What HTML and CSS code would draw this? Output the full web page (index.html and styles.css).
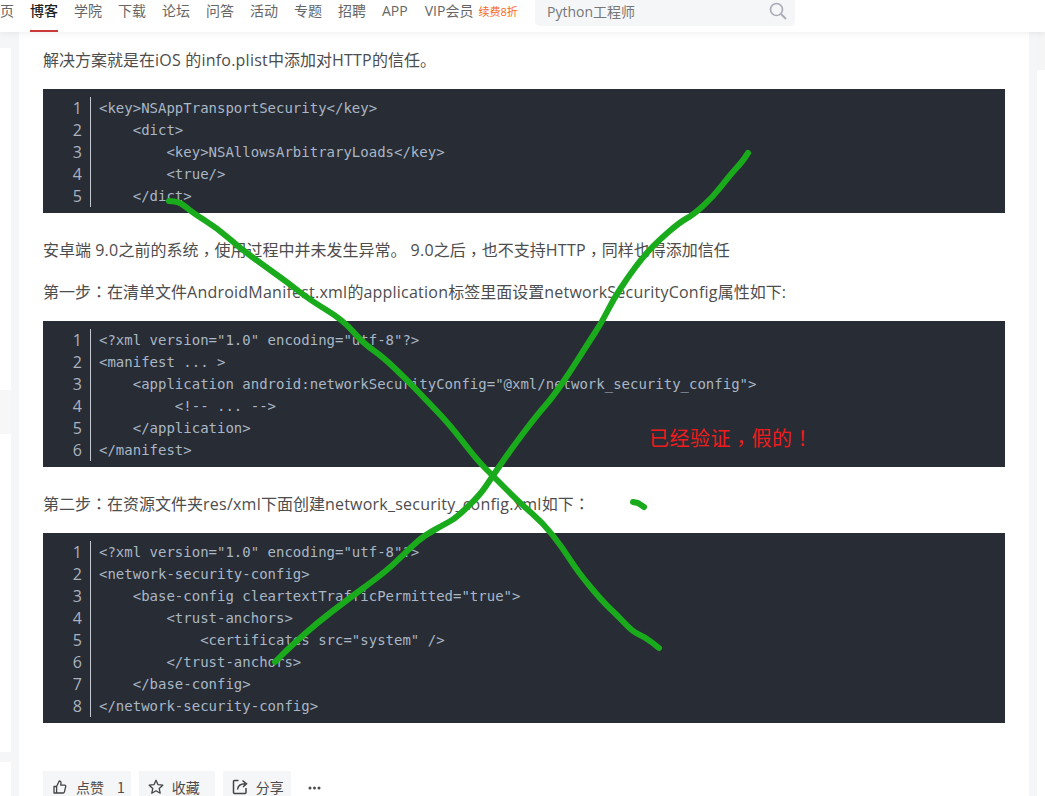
FILE: index.html
```html
<!DOCTYPE html>
<html lang="zh-CN">
<head>
<meta charset="utf-8">
<title>博客</title>
<link rel="stylesheet" href="styles.css">
</head>
<body>
<header class="topbar">
  <nav class="nav">
    <a class="nav-item">首页</a>
    <a class="nav-item active">博客</a>
    <a class="nav-item">学院</a>
    <a class="nav-item">下载</a>
    <a class="nav-item">论坛</a>
    <a class="nav-item">问答</a>
    <a class="nav-item">活动</a>
    <a class="nav-item">专题</a>
    <a class="nav-item">招聘</a>
    <a class="nav-item">APP</a>
    <a class="nav-item vip">VIP会员<span class="vip-tag">续费8折</span></a>
  </nav>
  <div class="search">
    <span class="search-text">Python工程师</span>
    <svg class="search-icon" viewBox="0 0 18 18" width="18" height="18"><circle cx="7.500" cy="7.500" r="6" fill="none" stroke="#a8adb8" stroke-width="1.7"/><path d="M12 12l5 5" fill="none" stroke="#a8adb8" stroke-width="2"/></svg>
  </div>
</header>
<div class="layout">
  <aside class="left">
    <div class="left-card first"></div>
    <div class="left-card muted"></div>
    <div class="left-card tall"></div>
    <div class="left-card"></div>
  </aside>
  <main class="article">
    <p class="para">解决方案就是在<span class="lat">iOS </span>的<span class="lat">info.plist</span>中添加对<span class="lat">HTTP</span>的信任。</p>
    <div class="code">
      <ol class="nums"><li>1</li><li>2</li><li>3</li><li>4</li><li>5</li></ol>
      <pre class="src">&lt;key&gt;NSAppTransportSecurity&lt;/key&gt;
    &lt;dict&gt;
        &lt;key&gt;NSAllowsArbitraryLoads&lt;/key&gt;
        &lt;true/&gt;
    &lt;/dict&gt;</pre>
    </div>
    <p class="para">安卓端 <span class="lat">9.0</span>之前的系统<span class="pu low" lang="zh-TW">，</span>使用过程中并未发生异常。 <span class="lat">9.0</span>之后<span class="pu low" lang="zh-TW">，</span>也不支持<span class="lat">HTTP</span><span class="pu low" lang="zh-TW">，</span>同样也得添加信任</p>
    <p class="para">第一步<span class="pu" lang="zh-TW">：</span>在清单文件<span class="lat">AndroidManifest.xml</span>的<span class="lat">application</span>标签里面设置<span class="lat">networkSecurityConfig</span>属性如下:</p>
    <div class="code">
      <ol class="nums"><li>1</li><li>2</li><li>3</li><li>4</li><li>5</li><li>6</li></ol>
      <pre class="src">&lt;?xml version="1.0" encoding="utf-8"?&gt;
&lt;manifest ... &gt;
    &lt;application android:networkSecurityConfig="@xml/network_security_config"&gt;
         &lt;!-- ... --&gt;
    &lt;/application&gt;
&lt;/manifest&gt;</pre>
    </div>
    <p class="para">第二步<span class="pu" lang="zh-TW">：</span>在资源文件夹<span class="lat">res/xml</span>下面创建<span class="lat">network_security_config.xml</span>如下<span class="pu" lang="zh-TW">：</span></p>
    <div class="code">
      <ol class="nums"><li>1</li><li>2</li><li>3</li><li>4</li><li>5</li><li>6</li><li>7</li><li>8</li></ol>
      <pre class="src">&lt;?xml version="1.0" encoding="utf-8"?&gt;
&lt;network-security-config&gt;
    &lt;base-config cleartextTrafficPermitted="true"&gt;
        &lt;trust-anchors&gt;
            &lt;certificates src="system" /&gt;
        &lt;/trust-anchors&gt;
    &lt;/base-config&gt;
&lt;/network-security-config&gt;</pre>
    </div>
    <div class="actions">
      <button class="action like">
        <svg class="action-icon" viewBox="0 0 16 16" width="16" height="16"><path d="M2 7.500h2.600v6.500H2zM4.600 7.500L7.200 2c1.300 0 2 .9 1.800 2.100L8.700 6.200h3.900c.9 0 1.300.7 1.100 1.500l-1.300 5.200c-.2.700-.6 1.100-1.300 1.100H4.600" fill="none" stroke="#444" stroke-width="1.300" stroke-linejoin="round"/></svg>
        <span>点赞</span><span class="count">1</span>
      </button>
      <button class="action fav">
        <svg class="action-icon" viewBox="0 0 16 16" width="16" height="16"><path d="M8 1.300l2 4.400 4.800.5-3.600 3.200 1 4.800L8 11.800l-4.200 2.400 1-4.800L1.200 6.200 6 5.700z" fill="none" stroke="#444" stroke-width="1.300" stroke-linejoin="round"/></svg>
        <span>收藏</span>
      </button>
      <button class="action share">
        <svg class="action-icon" viewBox="0 0 16 16" width="16" height="16"><path d="M6.500 1.500H2.500A1 1 0 0 0 1.500 2.500v11a1 1 0 0 0 1 1H13a1 1 0 0 0 1-1V9" fill="none" stroke="#444" stroke-width="1.500"/><path d="M5.500 10.500C6 7 8.500 4.800 13 4.800M10.500 1.500L14.500 4.800 11 8" fill="none" stroke="#444" stroke-width="1.500"/></svg>
        <span>分享</span>
      </button>
      <svg class="more" viewBox="0 0 13 4" width="13" height="4"><circle cx="2" cy="2" r="1.500"/><circle cx="6.500" cy="2" r="1.500"/><circle cx="11" cy="2" r="1.500"/></svg>
    </div>
  </main>
  <aside class="right"><div class="right-top"></div></aside>
</div>
<svg class="scribble" viewBox="0 0 1045 796" width="1045" height="796">
  <path d="M169 201 L174.500 201.500 Q180 202 186.500 207.500 Q193 213 205 220.500 Q217 228 228.500 238 Q240 248 251.500 256.500 Q263 265 275 273.500 Q287 282 298.500 291 Q310 300 326.500 310 Q343 320 353 331.500 Q363 343 373 350 Q383 357 395 368.500 Q407 380 418.500 392 Q430 404 440 414.500 Q450 425 463.500 442.500 Q477 460 484.500 467.500 Q492 475 506 489 Q520 503 531.500 513 Q543 523 552.500 535 Q562 547 570 559.500 Q578 572 590.500 587 Q603 602 610 608.500 Q617 615 625 623.500 Q633 632 639 634.500 Q645 637 652 642.500 L659 648"/>
  <path d="M748 153 L745 157.500 Q742 162 736 168.500 Q730 175 721.500 186 Q713 197 703 206 Q693 215 686.500 218.500 Q680 222 668.500 232 Q657 242 650 249.500 Q643 257 635.500 267 Q628 277 620.500 288.500 Q613 300 607.500 311 Q602 322 594.500 333.500 Q587 345 578.500 358.500 Q570 372 561 385 Q552 398 544.500 406.500 Q537 415 524.500 431.500 Q512 448 502 462.500 Q492 477 486 486 Q480 495 468.500 506 Q457 517 452 520 Q447 523 436 529 Q425 535 417.500 541.500 Q410 548 401.500 556.500 Q393 565 385 571.500 Q377 578 362 589 Q347 600 332 611.500 Q317 623 303.500 635 Q290 647 282.500 654.500 L275 662"/>
  <path d="M633 502 L638 503 L644 507"/>
</svg>
<div class="stamp">已经验证<span class="pu low" lang="zh-TW">，</span>假的<span class="pu" lang="zh-TW">！</span></div>
</body>
</html>
```
FILE: styles.css
```css
* { box-sizing: border-box; }
html, body { margin: 0; height: 796px; overflow: hidden; }
body {
  background: #f5f6f7;
  color: #4d4d4d;
  font-family: "Open Sans", "Noto Sans CJK SC", sans-serif;
  font-size: 16px;
  position: relative;
}
.pu { font-family: "Noto Sans CJK TC", sans-serif; line-height: 0; }
.pu.low { vertical-align: -.25em; }
.lat { letter-spacing: .23px; }
.topbar {
  height: 32px;
  background: #fff;
  box-shadow: 0 2px 6px rgba(0, 0, 0, .06);
  display: flex;
  position: relative;
  z-index: 1;
  overflow: hidden;
}
.nav { display: flex; gap: 16px; margin-left: -14px; width: 549px; flex: none; }
.nav-item { font-size: 14px; line-height: 21px; height: 32px; color: #666; white-space: nowrap; }
.nav-item.active { color: #222; border-bottom: 2px solid #ca3a3a; font-weight: 500; }
.vip { margin-left: 1px; }
.vip-tag { font-size: 11px; color: #f66a1c; margin-left: 5px; }
.search {
  width: 260px;
  height: 26px;
  background: #f5f6f7;
  border-radius: 0 0 5px 5px;
  display: flex;
  align-items: center;
  justify-content: space-between;
  padding: 0 8px 4px 12px;
}
.search-text { font-size: 14px; color: #777; }
.layout { display: flex; height: 764px; gap: 8px; }
.left { width: 11px; flex: none; padding-top: 16px; display: flex; flex-direction: column; }
.left-card { background: #fff; }
.left-card.first { height: 340px; }
.left-card.muted { height: 46px; background: #f7f7f8; border-top: 2px solid #fff; }
.left-card.tall { height: 318px; margin-bottom: 10px; }
.left-card:last-child { flex: 1; }
.article { width: 1010px; flex: none; background: #fff; padding: 15px 24px 0; }
.para { margin: 0 0 16px; line-height: 26px; height: 26px; white-space: nowrap; }
.code + .para { margin-top: 24px; }
.code {
  display: flex;
  background: #282c34;
  padding: 8px 0 6px;
  font-size: 14px;
  line-height: 22px;
}
.nums {
  list-style: none;
  margin: 0;
  padding: 0 8px 0 0;
  width: 48px;
  text-align: right;
  color: #abb2bf;
  font-size: 16px;
  border-right: 1px solid #c5cad2;
}
.src {
  margin: 0 0 0 8px;
  font-family: "DejaVu Sans Mono", monospace;
  font-size: 14px;
  line-height: 22px;
  color: #a9b7c6;
}
.actions { display: flex; gap: 8px; margin-top: 48px; align-items: flex-start; }
.action {
  display: flex;
  align-items: center;
  gap: 8px;
  height: 34px;
  padding: 0 7px 2px 9px;
  border: 0;
  background: #f5f6f7;
  font-family: "Noto Sans CJK SC", sans-serif;
  font-size: 14px;
  color: #4d4d4d;
}
.action.like { padding-right: 6px; }
.action.fav { padding-right: 15px; }
.action-icon { flex: none; }
.count { margin-left: 5px; }
.more { margin: 15px 0 0 9px; fill: #4d4d4d; }
.right { flex: 1; background: #fff; }
.right-top { height: 38px; background: #f5f5f5; }
.scribble {
  position: absolute;
  left: 0;
  top: 0;
  z-index: 2;
  pointer-events: none;
  fill: none;
  stroke: #1aab1c;
  stroke-width: 6;
  stroke-linecap: round;
  stroke-linejoin: round;
}
.stamp {
  position: absolute;
  left: 649px;
  top: 424px;
  z-index: 2;
  font-family: "Noto Sans CJK SC", sans-serif;
  font-size: 20px;
  line-height: 28px;
  letter-spacing: .5px;
  color: #ee1c1c;
  white-space: nowrap;
}
```
